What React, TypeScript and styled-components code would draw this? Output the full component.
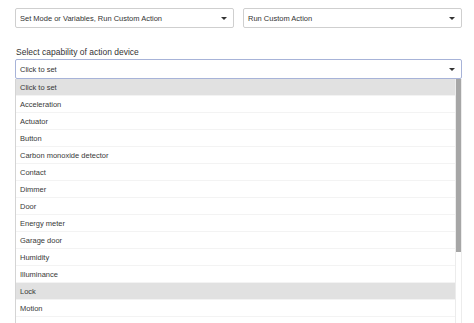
import React from "react";
import styled, { createGlobalStyle } from "styled-components";

const GlobalStyle = createGlobalStyle`
  html, body {
    margin: 0;
    padding: 0;
    background: #ffffff;
    overflow: hidden;
  }
  body {
    font-family: "Liberation Sans", Arial, sans-serif;
    color: #333;
  }
`;

const capabilities = [
  "Click to set",
  "Acceleration",
  "Actuator",
  "Button",
  "Carbon monoxide detector",
  "Contact",
  "Dimmer",
  "Door",
  "Energy meter",
  "Garage door",
  "Humidity",
  "Illuminance",
  "Lock",
  "Motion",
];

const highlighted = ["Click to set", "Lock"];

const App: React.FC = () => {
  return (
    <>
      <GlobalStyle />
      <Page>
        <TopRow>
          <Select>
            <span>Set Mode or Variables, Run Custom Action</span>
            <Caret />
          </Select>
          <Select>
            <span>Run Custom Action</span>
            <Caret />
          </Select>
        </TopRow>

        <Label>Select capability of action device</Label>
        <Select $focused>
          <span>Click to set</span>
          <Caret />
        </Select>

        <Dropdown>
          <Options>
            {capabilities.map((c) => (
              <Option key={c} $active={highlighted.includes(c)}>
                {c}
              </Option>
            ))}
          </Options>
          <Scrollbar>
            <Thumb />
          </Scrollbar>
        </Dropdown>
      </Page>
    </>
  );
};

export default App;

const Page = styled.div`
  height: 323px;
  padding: 8px 12px 0 15px;
  box-sizing: border-box;
  display: flex;
  flex-direction: column;
  overflow: hidden;
`;

const TopRow = styled.div`
  display: grid;
  grid-template-columns: 1fr 1fr;
  gap: 9px;
`;

const Select = styled.div<{ $focused?: boolean }>`
  height: 20px;
  box-sizing: border-box;
  border: 1px solid ${(p) => (p.$focused ? "#a7b3d8" : "#cfcfcf")};
  border-radius: 2px;
  background: #fff;
  display: flex;
  align-items: center;
  justify-content: space-between;
  padding: 0 5px 0 4px;
  font-size: 7.5px;
  color: #333;
`;

const Caret = styled.span`
  width: 0;
  height: 0;
  border-left: 3px solid transparent;
  border-right: 3px solid transparent;
  border-top: 3px solid #333;
  margin-right: 1px;
`;

const Label = styled.div`
  margin-top: 18px;
  font-size: 8.5px;
  line-height: 13px;
  color: #333;
  padding-left: 1px;
`;

const Dropdown = styled.div`
  flex: 1;
  display: flex;
  border-left: 1px solid #d4d4d4;
  overflow: hidden;
  min-height: 0;
`;

const Options = styled.div`
  flex: 1;
  display: flex;
  flex-direction: column;
`;

const Option = styled.div<{ $active?: boolean }>`
  height: 17px;
  flex: none;
  box-sizing: border-box;
  display: flex;
  align-items: center;
  padding-left: 4px;
  font-size: 7.5px;
  color: #383838;
  background: ${(p) => (p.$active ? "#e1e1e1" : "#fff")};
  border-bottom: 1px solid #f3f3f3;
`;

const Scrollbar = styled.div`
  width: 7px;
  flex: none;
  box-sizing: border-box;
  border-left: 1px solid #ececec;
  border-right: 1px solid #ececec;
  background: #fff;
`;

const Thumb = styled.div`
  height: 173px;
  background: #a6a6a6;
`;
